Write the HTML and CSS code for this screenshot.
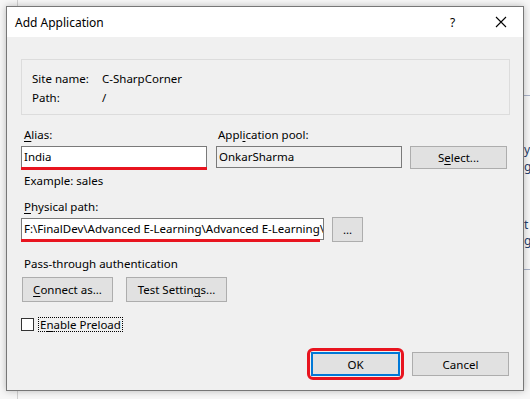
FILE: index.html
```html
<!DOCTYPE html>
<html>
<head lang="en">
    <meta charset="UTF-8">
    <title>Add Application</title>
    <link rel="stylesheet" href="styles.css">
</head>
<body>

    <!-- IIS manager window behind the dialog -->
    <div class="behind">
        <span class="frag f1">y</span>
        <span class="frag f2">g</span>
        <span class="frag f3">t</span>
        <span class="frag f4">g</span>
        <span class="rule r1"></span>
        <span class="rule r2"></span>
    </div>

    <div class="dialog">
        <div class="titlebar">
            <span class="title">Add Application</span>
            <span class="help">?</span>
            <svg class="close" width="12" height="12" viewBox="0 0 12 12">
                <path d="M1 1 L11 11 M11 1 L1 11" stroke="#000" stroke-width="1.1" fill="none"/>
            </svg>
        </div>

        <div class="body">
            <div class="group">
                <div class="info"><span class="key">Site name:</span><span>C-SharpCorner</span></div>
                <div class="info"><span class="key">Path:</span><span>/</span></div>
            </div>

            <div class="row labels">
                <span class="col-alias"><u>A</u>lias:</span>
                <span class="col-pool">Appl<u>i</u>cation pool:</span>
            </div>
            <div class="row inputs">
                <div class="mark alias">
                    <div class="field">India</div>
                </div>
                <div class="field pool readonly">OnkarSharma</div>
                <button class="btn select">S<u>e</u>lect...</button>
            </div>

            <div class="hint">Example: sales</div>

            <div class="label path-label"><u>P</u>hysical path:</div>
            <div class="row inputs">
                <div class="mark path short">
                    <div class="field">F:\FinalDev\Advanced E-Learning\Advanced E-Learning\</div>
                </div>
                <button class="btn browse">...</button>
            </div>

            <div class="label auth-label">Pass-through authentication</div>
            <div class="row buttons">
                <button class="btn connect"><u>C</u>onnect as...</button>
                <button class="btn test">Test Settin<u>g</u>s...</button>
            </div>

            <div class="check-row">
                <span class="checkbox"></span>
                <span class="focus">E<u>n</u>able Preload</span>
            </div>

            <div class="footer">
                <div class="ring"><button class="btn ok">OK</button></div>
                <button class="btn cancel">Cancel</button>
            </div>
        </div>
    </div>

</body>
</html>
```

FILE: styles.css
```css
* {
    padding: 0;
    margin: 0;
    box-sizing: border-box;
}
body {
    width: 530px;
    height: 399px;
    overflow: hidden;
    position: relative;
    background: #f7f7f7 linear-gradient(to right, transparent 17px, #d0d0d0 17px, #d0d0d0 18px, transparent 18px);
    font-family: "Segoe UI", "Noto Sans", sans-serif;
    font-size: 11.5px;
    color: #000;
    padding: 6px 0 0 6px;
}
u {
    text-decoration: underline;
    text-underline-offset: 2px;
}
.behind {
    position: absolute;
    left: 0;
    top: 0;
    width: 530px;
    height: 399px;
}
.frag {
    position: absolute;
    left: 524px;
    color: #27406b;
    font-size: 12px;
    line-height: 14px;
}
.f1 { top: 143px; }
.f2 { top: 160px; }
.f3 { top: 218px; }
.f4 { top: 234px; }
.rule {
    position: absolute;
    left: 524px;
    width: 6px;
    height: 1px;
    background-color: #a9b2c8;
}
.r1 { top: 95px; }
.r2 { top: 269px; }
.dialog {
    position: relative;
    width: 518px;
    height: 385px;
    border: 1px solid #777;
    background-color: #f0f0f0;
    box-shadow: 0 0 7px rgba(0, 0, 0, 0.25);
    display: flex;
    flex-direction: column;
}
.titlebar {
    height: 30px;
    background-color: #fff;
    display: flex;
    align-items: center;
    padding-left: 8px;
    font-size: 12px;
}
.title {
    flex: 1;
}
.help {
    width: 12px;
    margin-right: 33px;
}
.close {
    margin-right: 16px;
}
.body {
    padding: 22px 13px 0 14px;
    display: flex;
    flex-direction: column;
}
.group {
    height: 56px;
    border: 1px solid #dcdcdc;
    padding: 9px 0 0 10px;
}
.info {
    display: flex;
    line-height: 19px;
}
.key {
    width: 70px;
}
.row {
    display: flex;
}
.labels {
    margin-top: 12px;
    height: 16px;
    line-height: 16px;
}
.col-alias {
    width: 195px;
    padding-left: 3px;
}
.col-pool {
    padding-left: 2px;
}
.inputs {
    margin-top: 3px;
    align-items: flex-start;
}
.field {
    height: 22px;
    line-height: 20px;
    border: 1px solid #7a7a7a;
    background-color: #fff;
    padding-left: 2px;
    white-space: nowrap;
    overflow: hidden;
}
.readonly {
    background-color: #f0f0f0;
}
.mark {
    position: relative;
}
.mark::after {
    content: "";
    position: absolute;
    left: 0;
    right: 0;
    bottom: -2px;
    height: 3px;
    background-color: #e8141f;
}
.short::after {
    right: 4px;
}
.alias {
    width: 186px;
    margin-right: 9px;
}
.pool {
    width: 186px;
    margin-right: 8px;
}
.path {
    width: 303px;
    margin-right: 8px;
}
.btn {
    font-family: inherit;
    font-size: 11.5px;
    color: #000;
    background-color: #e1e1e1;
    border: 1px solid #adadad;
    height: 25px;
}
.select {
    width: 97px;
    height: 23px;
}
.browse {
    width: 31px;
    margin-top: -1px;
}
.hint {
    margin-top: 4px;
    line-height: 16px;
    padding-left: 3px;
}
.label {
    line-height: 16px;
    padding-left: 3px;
}
.path-label {
    margin-top: 10px;
}
.auth-label {
    margin-top: 14px;
}
.buttons {
    margin-top: 5px;
    padding-left: 1px;
    gap: 13px;
}
.connect {
    width: 91px;
}
.test {
    width: 101px;
}
.check-row {
    margin-top: 15px;
    display: flex;
    align-items: center;
    height: 15px;
}
.checkbox {
    width: 13px;
    height: 13px;
    border: 1px solid #333;
    background-color: #fff;
    margin-right: 4px;
}
.focus {
    border: 1px dotted #000;
    line-height: 13px;
    padding: 0 1px;
}
.footer {
    margin-top: 16px;
    display: flex;
    justify-content: flex-end;
    align-items: center;
    padding-right: 1px;
}
.ring {
    border: 3px solid #e8141f;
    border-radius: 6px;
    padding: 1px;
    margin-right: 8px;
}
.ok {
    width: 89px;
    height: 24px;
    border: 2px solid #0078d7;
    display: block;
}
.cancel {
    width: 97px;
    height: 24px;
}
```
